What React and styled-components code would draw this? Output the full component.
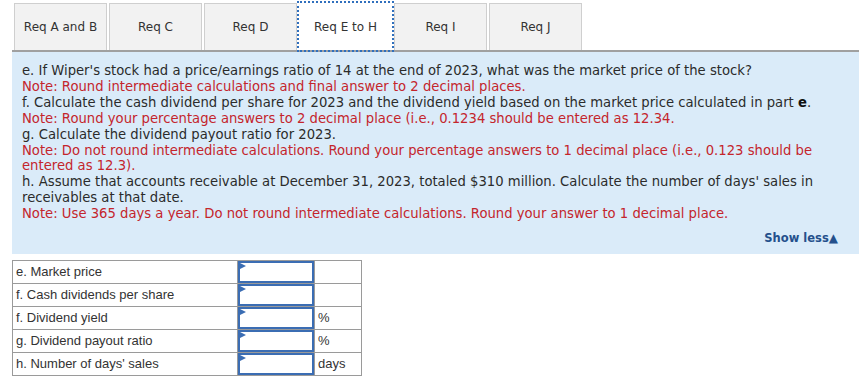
import React from 'react'
import styled, { createGlobalStyle } from 'styled-components'

const GlobalStyle = createGlobalStyle`
  body {
    margin: 0;
    background: #fff;
    font-family: 'DejaVu Sans', Verdana, sans-serif;
  }
`

const tabs = ['Req A and B', 'Req C', 'Req D', 'Req E to H', 'Req I', 'Req J']

const rows = [
  { label: 'e. Market price', unit: '' },
  { label: 'f. Cash dividends per share', unit: '' },
  { label: 'f. Dividend yield', unit: '%' },
  { label: 'g. Dividend payout ratio', unit: '%' },
  { label: "h. Number of days' sales", unit: 'days' },
]

const App = () => {
  return (
    <Page>
      <GlobalStyle />
      <TabBar>
        {tabs.map((t) => (
          <Tab key={t} $active={t === 'Req E to H'}>
            {t}
          </Tab>
        ))}
      </TabBar>
      <Panel>
        <Line>
          e. If Wiper's stock had a price/earnings ratio of 14 at the end of 2023, what was the market price of the stock?
        </Line>
        <Note>Note: Round intermediate calculations and final answer to 2 decimal places.</Note>
        <Line>
          f. Calculate the cash dividend per share for 2023 and the dividend yield based on the market price calculated in part <b>e</b>.
        </Line>
        <Note>Note: Round your percentage answers to 2 decimal place (i.e., 0.1234 should be entered as 12.34.</Note>
        <Line>g. Calculate the dividend payout ratio for 2023.</Line>
        <Note>
          Note: Do not round intermediate calculations. Round your percentage answers to 1 decimal place (i.e., 0.123 should be entered as 12.3).
        </Note>
        <Line>
          h. Assume that accounts receivable at December 31, 2023, totaled $310 million. Calculate the number of days' sales in receivables at that date.
        </Line>
        <Note>Note: Use 365 days a year. Do not round intermediate calculations. Round your answer to 1 decimal place.</Note>
        <ShowLess>
          Show less<span>▲</span>
        </ShowLess>
      </Panel>
      <AnswerTable>
        <tbody>
          {rows.map((r) => (
            <tr key={r.label}>
              <LabelCell>{r.label}</LabelCell>
              <InputCell>
                <Flag />
              </InputCell>
              <UnitCell>{r.unit}</UnitCell>
            </tr>
          ))}
        </tbody>
      </AnswerTable>
    </Page>
  )
}

const Page = styled.div`
  padding: 3px 0 0 12px;
`

const TabBar = styled.div`
  display: flex;
  gap: 2px;
  padding-left: 2px;
`

const Tab = styled.div`
  box-sizing: border-box;
  width: 93px;
  height: 47px;
  display: flex;
  align-items: center;
  justify-content: center;
  font-size: 12px;
  color: #333;
  background: ${(p) => (p.$active ? '#fff' : '#f2f2f2')};
  border: 1px solid ${(p) => (p.$active ? '#fff' : '#cfcfcf')};
  border-bottom: none;
  outline: ${(p) => (p.$active ? '2px dotted #2f6fbd' : 'none')};
  outline-offset: 0;
`

const Panel = styled.div`
  background: #daebf9;
  border-top: 2px solid #a0a0a0;
  padding: 11px 10px 7px 10px;
  font-size: 13.2px;
  line-height: 15.9px;
`

const Line = styled.div`
  color: #2b2b2b;
  b {
    font-weight: bold;
    color: #111;
  }
`

const Note = styled.div`
  color: #c4252c;
`

const ShowLess = styled.div`
  text-align: right;
  margin-top: 9px;
  padding-right: 11px;
  font-size: 11.5px;
  font-weight: bold;
  color: #24508c;
  span {
    font-size: 12px;
  }
`

const AnswerTable = styled.table`
  margin-top: 6px;
  border-collapse: collapse;
  table-layout: fixed;
  font-family: 'Liberation Sans', Arial, sans-serif;
  font-size: 13px;
  color: #333;
  td {
    border: 1px solid #9a9a9a;
    height: 23px;
    padding: 0;
    box-sizing: border-box;
  }
`

const LabelCell = styled.td`
  width: 225px;
  padding-left: 3px !important;
`

const InputCell = styled.td`
  width: 77px;
  position: relative;
  box-shadow: inset 0 0 0 2px #3b6db3;
  background: #fff;
`

const Flag = styled.span`
  position: absolute;
  left: 2px;
  top: 2px;
  width: 0;
  height: 0;
  border-top: 3px solid transparent;
  border-bottom: 3px solid transparent;
  border-left: 6px solid #3b6db3;
`

const UnitCell = styled.td`
  width: 47px;
  padding-left: 3px !important;
`

export default App
